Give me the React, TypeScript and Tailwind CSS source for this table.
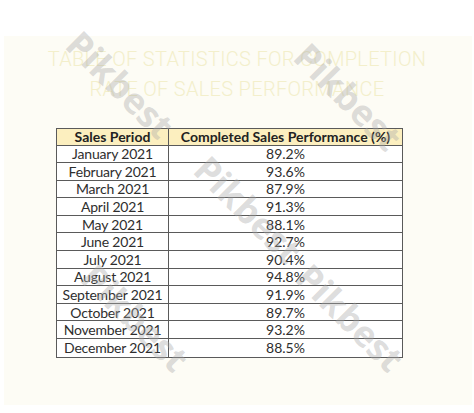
const rows: [string, string][] = [
  ["January 2021", "89.2%"],
  ["February 2021", "93.6%"],
  ["March 2021", "87.9%"],
  ["April 2021", "91.3%"],
  ["May 2021", "88.1%"],
  ["June 2021", "92.7%"],
  ["July 2021", "90.4%"],
  ["August 2021", "94.8%"],
  ["September 2021", "91.9%"],
  ["October 2021", "89.7%"],
  ["November 2021", "93.2%"],
  ["December 2021", "88.5%"],
];

// faint diagonal watermarks: centre [x, y]
const marks: [number, number][] = [
  [120, 85],
  [348, 97],
  [248, 210],
  [350, 318],
  [135, 318],
];

export default function App() {
  return (
    <div className="relative w-[474px] h-[413px] overflow-hidden bg-white font-['Lato',sans-serif]">
      <div className="absolute left-[4px] right-[2px] top-[36px] bottom-[8px] bg-[#fdfcf5]" />

      <div className="relative pt-[44px]">
        {/* title */}
        <div className="text-center font-['Roboto',sans-serif] font-light text-[20px] leading-[30px] tracking-[0.3px] text-[#f3efcb]">
          <p>TABLE OF STATISTICS FOR COMPLETION</p>
          <p>RATE OF SALES PERFORMANCE</p>
        </div>

        {/* table */}
        <div className="ml-[56px] mt-[24px] w-[347px] border-[1.5px] border-[#5a5a5a] bg-white text-[14px] text-[#2e2e2e]">
          <div className="flex h-[16.5px] bg-[#fcefbf] border-b-[1.5px] border-[#5a5a5a] font-bold text-[#222]">
            <div className="w-[112px] flex items-center justify-center border-r-[1.5px] border-[#5a5a5a]">Sales Period</div>
            <div className="flex-1 flex items-center justify-center">Completed Sales Performance (%)</div>
          </div>
          {rows.map(([period, value], i) => (
            <div
              key={period}
              className={`flex h-[17.6px] ${i < rows.length - 1 ? "border-b-[1.5px] border-[#5a5a5a]" : ""}`}
            >
              <div className="w-[112px] flex items-center justify-center border-r-[1.5px] border-[#5a5a5a] tracking-[-0.2px]">{period}</div>
              <div className="flex-1 flex items-center justify-center">{value}</div>
            </div>
          ))}
        </div>
      </div>

      {marks.map(([x, y], i) => (
        <div
          key={i}
          className="absolute w-[160px] h-[50px] -ml-[80px] -mt-[25px] flex items-center justify-center rotate-45 text-[36px] font-bold font-['Open_Sans',sans-serif] text-[#a8a8a8]/40 pointer-events-none select-none"
          style={{ left: x, top: y }}
        >
          Pikbest
        </div>
      ))}
    </div>
  );
}
